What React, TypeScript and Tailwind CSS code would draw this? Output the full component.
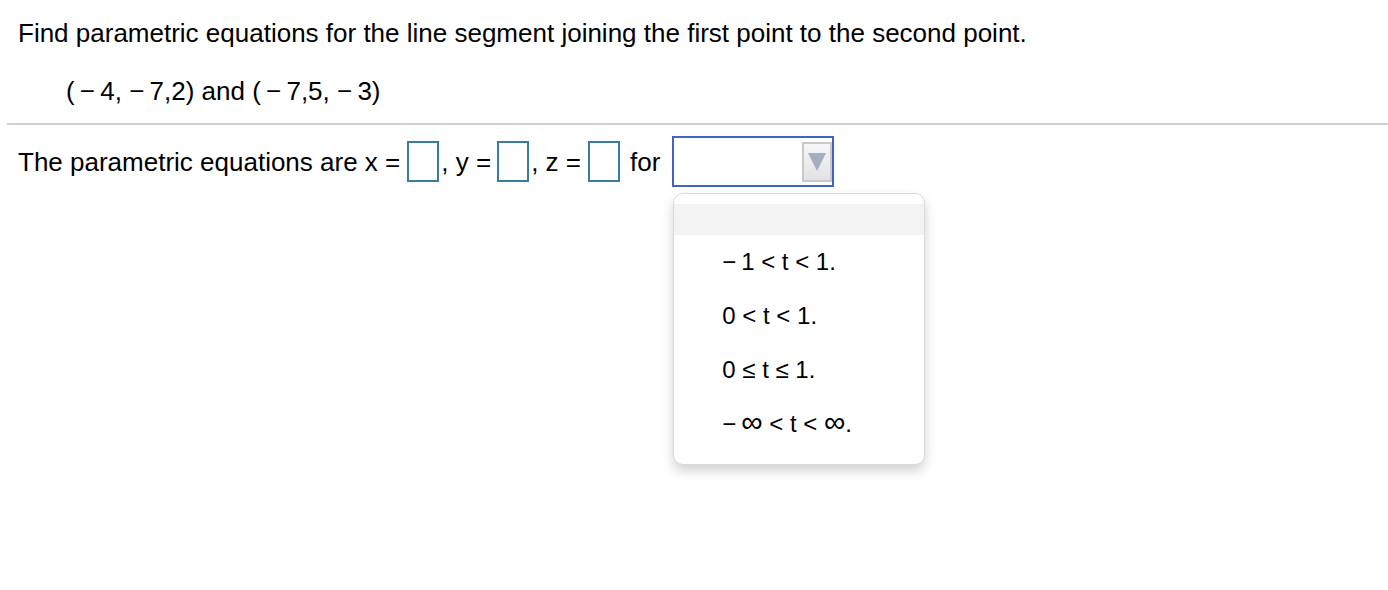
import React from "react";

const Box = () => (
  <span className="inline-block w-[32px] h-[41px] border-2 border-[#3b7b9b] bg-white" />
);

const Inf = () => <span className="text-[30px] leading-[24px]">{"\u221E"}</span>;

export default function App() {
  const opts: React.ReactNode[] = [
    "\u2212\u20091 < t < 1.",
    "0 < t < 1.",
    "0 \u2264 t \u2264 1.",
    <>
      {"\u2212\u2009"}
      <Inf />
      {" < t < "}
      <Inf />
      {"."}
    </>,
  ];
  return (
    <div
      className="w-[1388px] h-[590px] bg-white text-black overflow-hidden"
      style={{ fontFamily: '"Liberation Sans", Arial, sans-serif' }}
    >
      <div className="pl-[18px] pt-[17px] text-[26px] leading-[32px]">
        Find parametric equations for the line segment joining the first point to the second point.
      </div>
      <div className="pl-[66px] pt-[26px] text-[26px] leading-[32px]">
        (&thinsp;&minus;&thinsp;4, &minus;&thinsp;7,2) and (&thinsp;&minus;&thinsp;7,5, &minus;&thinsp;3)
      </div>
      <div className="ml-[7px] mt-[16px] h-[2px] bg-[#cdd1dc]" />
      <div className="pl-[18px] mt-[11px] flex items-center text-[26px] leading-[32px]">
        <span>The parametric equations are x&nbsp;=</span>
        <span className="ml-[7px] flex"><Box /></span>
        <span className="ml-[2px]">, y&nbsp;=</span>
        <span className="ml-[6px] flex"><Box /></span>
        <span className="ml-[2px]">, z&nbsp;=</span>
        <span className="ml-[7px] flex"><Box /></span>
        <span className="ml-[10px]">for</span>
        <div className="relative ml-[12px]">
          <div className="w-[162px] h-[51px] border-2 border-[#3d64c6] bg-white flex items-start justify-end pt-[4px]">
            <div className="w-[30px] h-[40px] border-2 border-[#c9c9c9] bg-gradient-to-b from-[#f7f7f7] to-[#e2e2e2] flex items-center justify-center">
              <svg width="18" height="18" viewBox="0 0 18 18">
                <polygon points="0,0 18,0 9,18" fill="#a6adc3" />
              </svg>
            </div>
          </div>
          <div className="absolute left-[1px] top-[57px] w-[252px] h-[272px] bg-white border border-[#dadada] rounded-[10px] shadow-[0_6px_12px_rgba(0,0,0,0.18)] pt-[10px]">
            <div className="h-[31px] bg-[#f3f3f3]" />
            {opts.map((o, i) => (
              <div key={i} className="h-[54px] flex items-center pl-[48px] text-[24px]">
                <span>{o}</span>
              </div>
            ))}
          </div>
        </div>
      </div>
    </div>
  );
}
